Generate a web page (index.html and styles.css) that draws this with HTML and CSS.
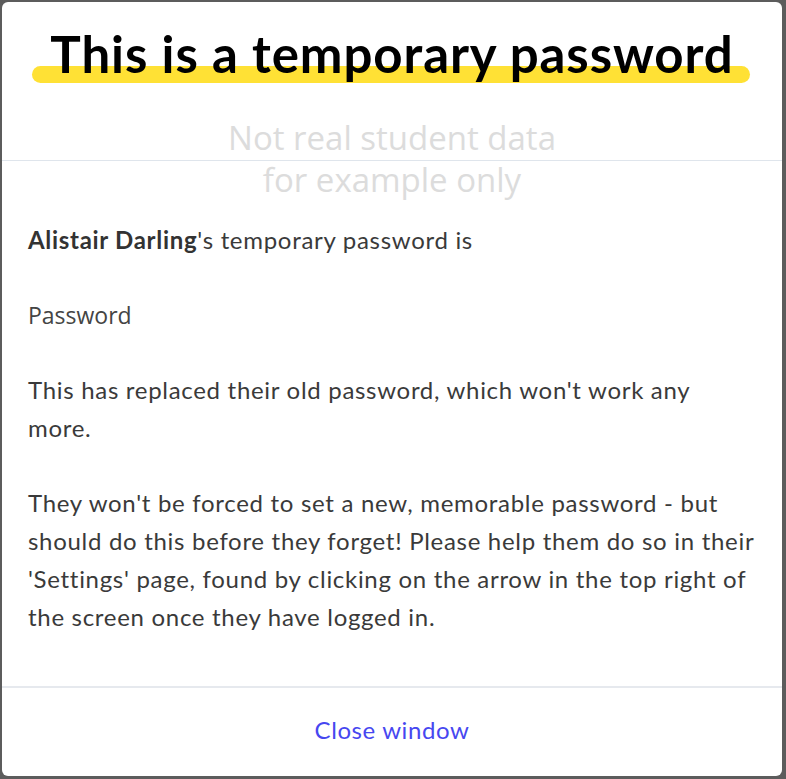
FILE: index.html
```html
<!DOCTYPE html>
<html lang="en">
    <head>
        <meta charset="UTF-8" />
        <meta name="viewport" content="width=device-width, initial-scale=1.0" />
        <title>Temporary password</title>
        <link rel="stylesheet" href="styles.css">
    </head>
    <body>
        <div class="modal">
            <div class="modal-header">
                <h1 class="highlight">This is a temporary password</h1>
            </div>

            <div class="watermark">Not real student data<br />for example only</div>

            <div class="modal-body">
                <p><strong>Alistair Darling</strong>'s temporary password is</p>
                <p class="password">Password</p>
                <p>This has replaced their old password, which won't work any more.</p>
                <p>
                    They won't be forced to set a new, memorable password - but
                    should do this before they forget! Please help them do so in their
                    'Settings' page, found by clicking on the arrow in the top right of
                    the screen once they have logged in.
                </p>
            </div>

            <div class="modal-footer">
                <a href="#" class="close-link">Close window</a>
            </div>
        </div>
    </body>
</html>
```

FILE: styles.css
```css
body {
    margin: 0;
    height: 100vh;
    background-color: #5c5c5c;
    font-family: Lato, "Open Sans", sans-serif;
    padding: 2px 4px 3px 2px;
    box-sizing: border-box;
}

.modal {
    position: relative;
    height: 100%;
    background-color: #fff;
    border-radius: 6px;
    display: flex;
    flex-direction: column;
}

.modal-header {
    height: 158px;
    border-bottom: 1px solid #dfe5ec;
    display: flex;
    justify-content: center;
    align-items: flex-start;
}

.modal-header h1 {
    margin: 22px 0 0;
    font-size: 51px;
    font-weight: 700;
    letter-spacing: 0.9px;
    color: #000;
    line-height: 60px;
}

/* yellow marker stroke under the title */
.highlight {
    position: relative;
    z-index: 0;
}

.highlight::after {
    content: "";
    position: absolute;
    z-index: -1;
    left: -18px;
    right: -16px;
    top: 42px;
    height: 17px;
    border-radius: 9px;
    background-color: #ffe135;
}

.watermark {
    position: absolute;
    top: 115px;
    left: 0;
    right: 0;
    text-align: center;
    font-family: "Open Sans", sans-serif;
    font-size: 33px;
    line-height: 42px;
    color: #dcdcdc;
    pointer-events: none;
}

.modal-body {
    flex: 1;
    padding: 60px 28px 0 26px;
    color: #3a3a3a;
    font-size: 24px;
    letter-spacing: 0.7px;
    line-height: 38px;
}

.modal-body p {
    margin: 0 0 37px;
}

.modal-body strong {
    font-weight: 700;
    color: #333;
}

.password {
    font-family: "Open Sans", sans-serif;
    font-size: 23px;
    letter-spacing: 0;
    color: #444;
}

.modal-footer {
    height: 90px;
    padding-bottom: 6px;
    box-sizing: border-box;
    border-top: 2px solid #e6e9ee;
    display: flex;
    justify-content: center;
    align-items: center;
}

.close-link {
    color: #4747f0;
    text-decoration: none;
    font-size: 24px;
    letter-spacing: 0.6px;
}
```
